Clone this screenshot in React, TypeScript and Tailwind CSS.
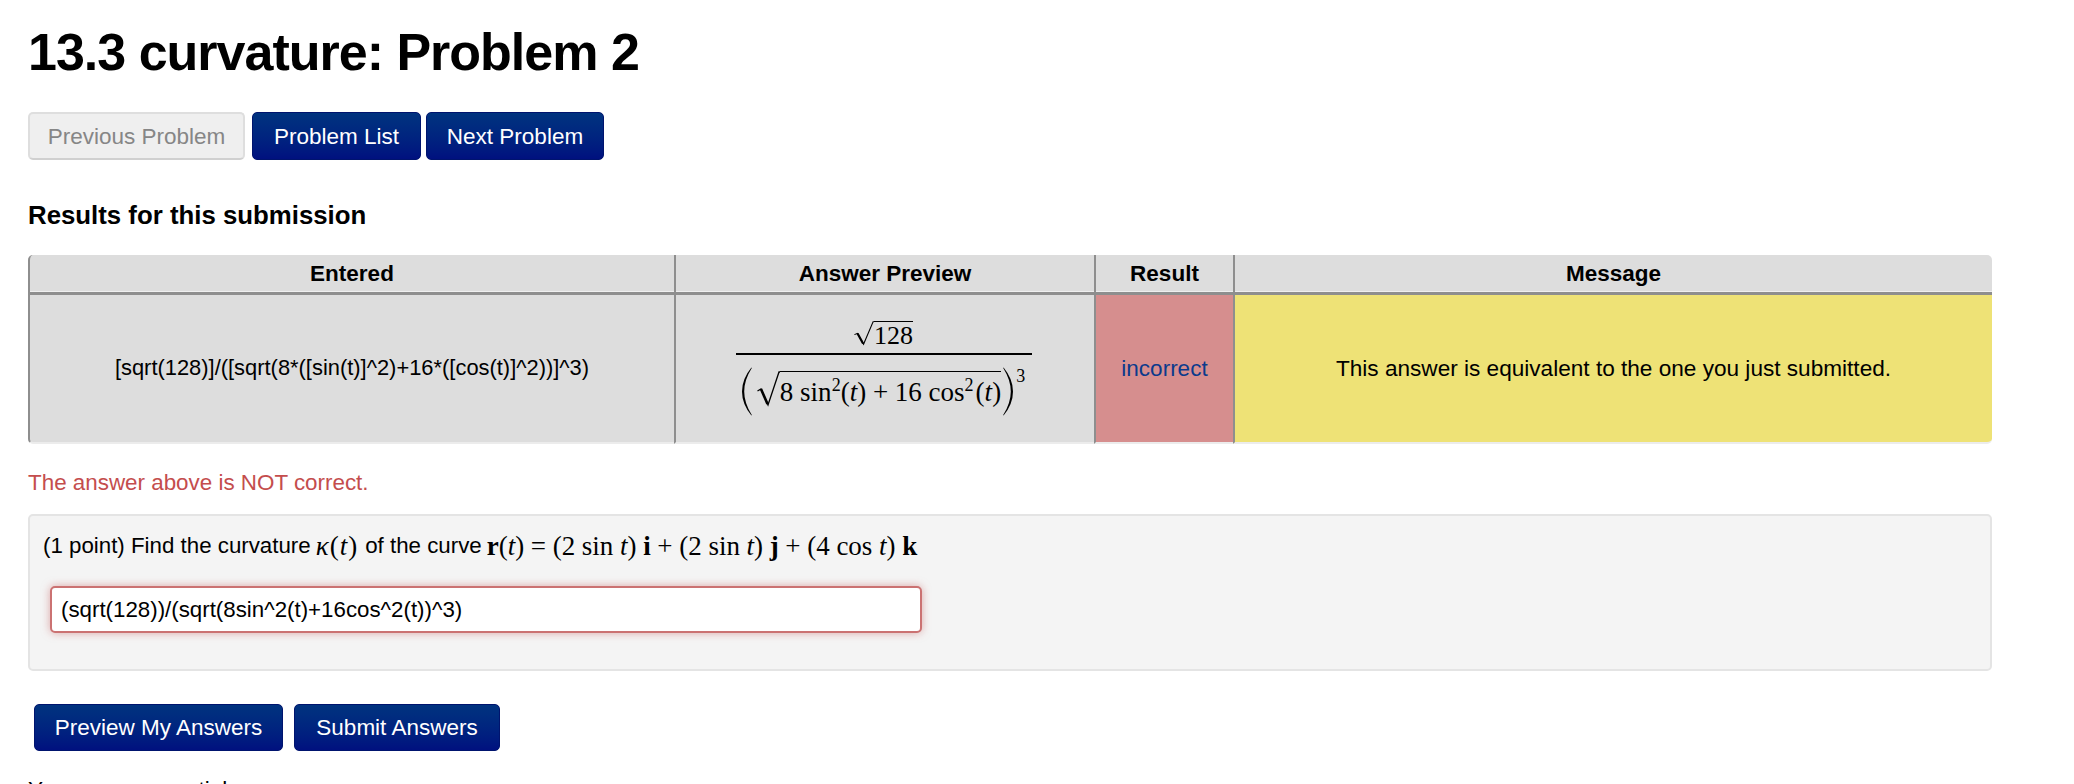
const sans = { fontFamily: '"Liberation Sans", Arial, sans-serif' }

function NavButton({ label, disabled, className = '' }: { label: string; disabled?: boolean; className?: string }) {
  if (disabled) {
    return (
      <button className={`rounded-[5px] border-2 border-[#dedede] border-b-[#d0d0d0] bg-[#efefef] pt-[1px] text-[22.5px] text-[#868686] ${className}`}>
        {label}
      </button>
    )
  }
  return (
    <button className={`rounded-[5px] border border-[#00146e] bg-gradient-to-b from-[#00337f] to-[#00107f] pt-[1px] text-[22.5px] text-white ${className}`}>
      {label}
    </button>
  )
}

function Radical({ className }: { className: string }) {
  return (
    <svg className={`${className} shrink-0`} viewBox="0 0 23 41" preserveAspectRatio="none">
      <path d="M0.5 20 L4 18 L11 34 L22 1 L23 1" fill="none" stroke="#000" strokeWidth="1.3" />
      <path d="M4 18 L10.5 33" fill="none" stroke="#000" strokeWidth="2.6" />
    </svg>
  )
}

function Paren({ flip }: { flip?: boolean }) {
  return (
    <svg className={`h-[49px] w-[10px] shrink-0 ${flip ? '-scale-x-100' : ''}`} viewBox="0 0 10 49">
      <path d="M9.4 0.5 Q0 12 0 24.5 Q0 37 9.4 48.5 L9.8 48 Q2.2 36 2.2 24.5 Q2.2 13 9.8 1 Z" fill="#000" />
    </svg>
  )
}

function Preview() {
  return (
    <div className="flex flex-col items-center font-['Liberation_Serif',serif] text-black">
      <div className="flex items-start pb-[4px] text-[26px]">
        <Radical className="h-[28px] w-[20px]" />
        <span className="border-t-[1.5px] border-black leading-[27px]">128</span>
      </div>
      <div className="flex w-[296px] items-center justify-center border-t-2 border-black pt-[12px] text-[27px]">
        <Paren />
        <span className="ml-[5px] flex items-start">
          <Radical className="h-[41px] w-[23px]" />
          <span className="whitespace-nowrap border-t-[1.5px] border-black leading-[40px]">
            8 sin<span className="relative top-[-10px] text-[18px] leading-none">2</span>(<i>t</i>) + 16 cos
            <span className="relative top-[-10px] text-[18px] leading-none">2</span>
            <span className="ml-[2px]">(<i>t</i>)</span>
          </span>
        </span>
        <span className="ml-[2px] flex">
          <Paren flip />
        </span>
        <span className="mb-[31px] ml-[3px] text-[18px] leading-none">3</span>
      </div>
    </div>
  )
}

const headCell = 'border-b-[3px] border-l-2 border-b-[#8e8e8e] border-l-[#8e8e8e] pt-[1px] shadow-[inset_0_-1px_0_#efefef]'
const bodyCell = 'border-b-2 border-l-2 border-b-[#ececec] border-l-[#8e8e8e]'

export default function App() {
  return (
    <div style={sans} className="h-[784px] overflow-hidden bg-white px-[28px] text-black">
      <h1 className="pt-[21px] text-[52px] font-bold leading-[62px] tracking-[-1px]">13.3 curvature: Problem 2</h1>
      <div className="mt-[29px] flex h-[48px] gap-[5px]">
        <NavButton label="Previous Problem" disabled className="mr-[2px] w-[217px]" />
        <NavButton label="Problem List" className="w-[169px]" />
        <NavButton label="Next Problem" className="w-[178px]" />
      </div>
      <h2 className="mt-[40px] text-[25.8px] font-bold leading-[30px]">Results for this submission</h2>

      <table className="mt-[25px] w-[1964px] table-fixed border-separate border-spacing-0 text-[22.5px]">
        <colgroup>
          <col className="w-[646px]" />
          <col className="w-[420px]" />
          <col className="w-[139px]" />
          <col />
        </colgroup>
        <thead>
          <tr className="h-[40px] bg-[#dddddd] font-bold">
            <th className={`rounded-tl-[5px] ${headCell}`}>Entered</th>
            <th className={headCell}>Answer Preview</th>
            <th className={headCell}>Result</th>
            <th className={`rounded-tr-[5px] ${headCell}`}>Message</th>
          </tr>
        </thead>
        <tbody>
          <tr className="h-[149px] text-center">
            <td className={`rounded-bl-[5px] bg-[#dddddd] text-[21.9px] ${bodyCell}`}>
              [sqrt(128)]/([sqrt(8*([sin(t)]^2)+16*([cos(t)]^2))]^3)
            </td>
            <td className={`bg-[#dddddd] pr-[3px] ${bodyCell}`}>
              <Preview />
            </td>
            <td className={`bg-[#d68e8e] text-[#0b3a8c] ${bodyCell}`}>incorrect</td>
            <td className={`rounded-br-[5px] bg-[#eee276] text-[22.6px] ${bodyCell}`}>
              This answer is equivalent to the one you just submitted.
            </td>
          </tr>
        </tbody>
      </table>

      <p className="mt-[25px] text-[22.4px] leading-[28px] text-[#c44d4d]">The answer above is NOT correct.</p>

      <div className="mt-[17px] h-[157px] w-[1964px] rounded-[5px] border-2 border-[#e4e4e4] bg-[#f4f4f4] px-[13px] pt-[12px]">
        <p className="flex h-[36px] items-center gap-[5px] text-[22.3px]">
          (1 point) Find the curvature
          <span className="mr-[2px] font-['Liberation_Serif',serif] text-[27px] tracking-[1px]">
            <i>κ</i>(<i>t</i>)
          </span>
          of the curve
          <span className="whitespace-nowrap font-['Liberation_Serif',serif] text-[27px] [word-spacing:-0.1px]">
            <b>r</b>(<i>t</i>) = (2 sin <i>t</i>) <b>i</b> + (2 sin <i>t</i>) <b>j</b> + (4 cos <i>t</i>) <b>k</b>
          </span>
        </p>
        <input
          readOnly
          value="(sqrt(128))/(sqrt(8sin^2(t)+16cos^2(t))^3)"
          className="ml-[7px] mt-[22px] block h-[47px] w-[872px] rounded-[5px] border-2 border-[#cb7272] bg-white px-[9px] text-[22.3px] shadow-[0_0_8px_rgba(203,114,114,0.6)] outline-none"
        />
      </div>

      <div className="ml-[6px] mt-[33px] flex h-[47px] gap-[11px]">
        <NavButton label="Preview My Answers" className="w-[249px]" />
        <NavButton label="Submit Answers" className="w-[206px]" />
      </div>
      <p className="mt-[25px] text-[22.5px] leading-[28px]">You can earn partial</p>
    </div>
  )
}
